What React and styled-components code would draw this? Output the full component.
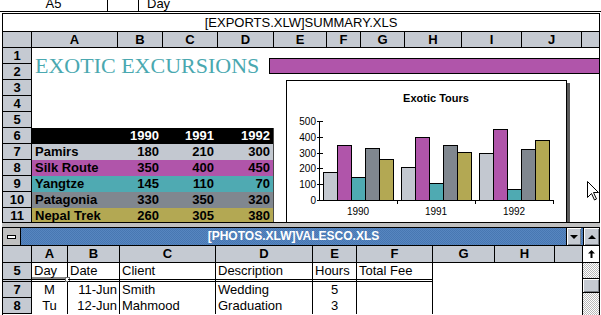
import React from "react";
import styled, { createGlobalStyle } from "styled-components";

const GlobalStyle = createGlobalStyle`
  *, *::before, *::after { box-sizing: border-box; }
  html, body { margin: 0; padding: 0; background: #fff; }
  body {
    font-family: "Liberation Sans", Arial, sans-serif;
    width: 601px;
    height: 315px;
    overflow: hidden;
  }
`;

const TOP_COLS = "29px 86px 45px 55px 56px 53px 34px 44px 57px 60px 60px 1fr";
const BOTTOM_COLS = "29px 36px 52px 96px 97px 44px 76px 62px 60px 1fr";
const TOP_LETTERS = ["A", "B", "C", "D", "E", "F", "G", "H", "I", "J", ""];
const BOTTOM_LETTERS = ["A", "B", "C", "D", "E", "F", "G", "H", ""];

const SERIES = [
  { name: "Pamirs", color: "#c3c8d0", values: [180, 210, 300] },
  { name: "Silk Route", color: "#b055aa", values: [350, 400, 450] },
  { name: "Yangtze", color: "#4faab2", values: [145, 110, 70] },
  { name: "Patagonia", color: "#80878f", values: [330, 350, 320] },
  { name: "Nepal Trek", color: "#b3a853", values: [260, 305, 380] },
];
const YEARS = ["1990", "1991", "1992"];
const HEADER_GRAY = "#c5cad2";

const Screen = styled.div`
  position: relative;
  width: 601px;
  height: 315px;
  overflow: hidden;
  background: #fff;
`;

/* formula bar */
const FormulaBar = styled.div`
  display: flex;
  height: 12px;
  border-bottom: 1px solid #000;
  font-size: 13px;
  line-height: 11px;
  overflow: hidden;
`;

const NameBox = styled.div`
  width: 108px;
  border-right: 1px solid #000;
  text-align: center;
  margin-top: -2px;
`;

const FormulaGap = styled.div`
  width: 31px;
  border-right: 1px solid #000;
`;

const FormulaText = styled.div`
  padding-left: 8px;
  margin-top: -2px;
`;

/* windows */
const TopWindow = styled.div`
  margin: 1px 1px 0 2px;
  height: 210px;
  border: 1px solid #000;
  overflow: hidden;
  background: #fff;
`;

const TitleBar = styled.div`
  height: 18px;
  border-bottom: 1px solid #000;
  font-size: 13px;
  line-height: 17px;
  text-align: center;
  color: #000;
`;

const HeaderRow = styled.div`
  display: grid;
  grid-template-columns: ${(p) => p.$cols};
  height: ${(p) => p.$h || 16}px;
  border-bottom: 1px solid #000;
  background: ${HEADER_GRAY};
`;

const ColHead = styled.div`
  border-right: ${(p) => (p.$last ? "none" : "1px solid #000")};
  font-size: 13px;
  font-weight: bold;
  line-height: 15px;
  text-align: center;
`;

const SheetBody = styled.div`
  display: grid;
  grid-template-columns: ${TOP_COLS};
  grid-template-rows: repeat(11, 16px);
`;

const RowHead = styled.div`
  grid-column: 1;
  grid-row: ${(p) => p.$row || "auto"};
  background: ${HEADER_GRAY};
  border-right: 1px solid #000;
  border-bottom: ${(p) => (p.$double ? "3px double #000" : "1px solid #000")};
  font-size: 13px;
  font-weight: bold;
  line-height: 15px;
  text-align: center;
`;

const Banner = styled.div`
  grid-column: 2 / 6;
  grid-row: 1 / 3;
  margin-top: 7px;
  padding-left: 3px;
  font-family: "Liberation Serif", "Times New Roman", serif;
  font-size: 22px;
  line-height: 22px;
  color: #4aa8b0;
  white-space: nowrap;
`;

const PurpleBar = styled.div`
  grid-column: 6 / 13;
  grid-row: 1 / 3;
  margin: 10px 0 0 -5px;
  height: 16px;
  background: #b055aa;
  border: 1px solid #000;
  border-right: none;
`;

const ChartFrame = styled.div`
  grid-column: 6 / 12;
  grid-row: 3 / 12;
  justify-self: start;
  margin-left: 12px;
  width: 281px;
  height: 150px;
  border: 1px solid #000;
  background: #fff;
  box-shadow: 3px 3px 0 #5a5a5a;
`;

const DataRow = styled.div`
  grid-column: 2 / 6;
  grid-row: ${(p) => p.$row};
  display: grid;
  grid-template-columns: 86px 45px 55px 56px;
  background: ${(p) => p.$bg};
  color: ${(p) => (p.$dark ? "#fff" : "#000")};
  border-right: 1px solid #4a4a4a;
  font-size: 13px;
  font-weight: bold;
  line-height: 16px;
`;

const LabelCell = styled.div`
  padding-left: 3px;
  white-space: nowrap;
`;

const NumCell = styled.div`
  text-align: right;
  padding-right: 4px;
`;

/* bottom window */
const BottomWindow = styled.div`
  margin: 0 1px 0 2px;
  border-left: 1px solid #000;
  border-right: 1px solid #000;
  background: #fff;
`;

const FrameStrip = styled.div`
  height: 5px;
  margin: 0 -1px;
  background: #c0c0c0;
  border-bottom: 1px solid #000;
`;

const ActiveTitle = styled.div`
  display: flex;
  height: 18px;
  border-bottom: 1px solid #000;
  background: repeating-conic-gradient(#4877b2 0 25%, #5786c0 0 50%) 0 0 / 2px 2px;
`;

const ControlBox = styled.div`
  width: 18px;
  border-right: 1px solid #000;
  background: #c0c0c0;
  display: flex;
  align-items: center;
  justify-content: center;
`;

const Dash = styled.div`
  width: 9px;
  height: 4px;
  background: #fff;
  border: 1px solid #000;
`;

const ActiveCaption = styled.div`
  flex: 1;
  color: #fff;
  font-size: 12px;
  font-weight: bold;
  line-height: 17px;
  text-align: center;
  white-space: nowrap;
`;

const SizeButton = styled.div`
  width: ${(p) => p.$w}px;
  margin-left: ${(p) => p.$gap || 0}px;
  background: ${HEADER_GRAY};
  border-left: 1px solid #000;
  border-right: ${(p) => (p.$edge ? "1px solid #000" : "none")};
  box-shadow: inset 1px 1px 0 #fff, inset -1px -1px 0 #7a7f86;
  display: flex;
  align-items: center;
  justify-content: center;
`;

const Triangle = styled.div`
  width: 0;
  height: 0;
  border-left: 4px solid transparent;
  border-right: 4px solid transparent;
  ${(p) => (p.$up ? "border-bottom: 4px solid #000;" : "border-top: 4px solid #000;")}
`;

const BottomBody = styled.div`
  display: flex;
`;

const Sheet = styled.div`
  flex: 1;
  min-width: 0;
`;

const GridRow = styled.div`
  display: grid;
  grid-template-columns: ${BOTTOM_COLS};
  height: ${(p) => p.$h}px;
`;

const Cell = styled.div`
  position: relative;
  border-right: ${(p) => (p.$b ? "1px solid #000" : "none")};
  border-bottom: ${(p) => (p.$double ? "3px double #000" : "none")};
  box-shadow: ${(p) => (p.$active ? "inset 0 -2px 0 #8c8c8c" : "none")};
  padding: 0 2px;
  font-size: 13px;
  line-height: 16px;
  text-align: ${(p) => p.$align || "left"};
  white-space: nowrap;
  color: #000;
`;

const FillHandle = styled.span`
  position: absolute;
  right: -3px;
  bottom: -3px;
  width: 5px;
  height: 5px;
  background: #fff;
  border: 1px solid #6a6a6a;
`;

const ScrollBar = styled.div`
  width: 17px;
  border-left: 1px solid #000;
  display: flex;
  flex-direction: column;
  height: 70px;
`;

const ScrollArrow = styled.div`
  height: 17px;
  background: #fff;
  border-bottom: 1px solid #000;
  display: flex;
  align-items: center;
  justify-content: center;
`;

const Track = styled.div`
  height: ${(p) => (p.$h ? `${p.$h}px` : "auto")};
  flex: ${(p) => (p.$h ? "none" : 1)};
  background: repeating-conic-gradient(#fff 0 25%, #b8b8b8 0 50%) 0 0 / 2px 2px;
`;

const Thumb = styled.div`
  height: 15px;
  background: ${HEADER_GRAY};
  border-top: 1px solid #000;
  border-bottom: 1px solid #000;
  box-shadow: inset 1px 1px 0 #fff, inset -1px -1px 0 #7a7f86;
`;

const Cursor = styled.svg`
  position: absolute;
  left: 587px;
  top: 181px;
`;

function TourChart() {
  const k = 0.158;
  return (
    <svg width="279" height="148" viewBox="1 1 279 148" fontFamily="Liberation Sans, Arial, sans-serif">
      <text x="150" y="22" textAnchor="middle" fontSize="11" fontWeight="bold">
        Exotic Tours
      </text>
      {[0, 100, 200, 300, 400, 500].map((v) => {
        const y = Math.round(120 - v * k) + 0.5;
        return (
          <g key={v}>
            <line x1="31" y1={y} x2="37" y2={y} stroke="#000" />
            <text x="30" y={y + 3.5} textAnchor="end" fontSize="10">
              {v}
            </text>
          </g>
        );
      })}
      <line x1="33.5" y1="41" x2="33.5" y2="121" stroke="#000" />
      {SERIES.map((s, i) =>
        s.values.map((v, g) => {
          const h = Math.round(v * k);
          return (
            <rect
              key={s.name + g}
              x={37.5 + 78 * g + 14 * i}
              y={120.5 - h}
              width="14"
              height={h}
              fill={s.color}
              stroke="#000"
            />
          );
        })
      )}
      <line x1="33" y1="120.5" x2="268" y2="120.5" stroke="#000" />
      {[111.5, 189.5, 267.5].map((x) => (
        <line key={x} x1={x} y1="120" x2={x} y2="124" stroke="#000" />
      ))}
      {YEARS.map((yr, g) => (
        <text key={yr} x={72 + 78 * g} y="135" textAnchor="middle" fontSize="10">
          {yr}
        </text>
      ))}
    </svg>
  );
}

export default function App() {
  return (
    <>
      <GlobalStyle />
      <Screen>
        <FormulaBar>
          <NameBox>A5</NameBox>
          <FormulaGap />
          <FormulaText>Day</FormulaText>
        </FormulaBar>

        <TopWindow>
          <TitleBar>[EXPORTS.XLW]SUMMARY.XLS</TitleBar>
          <HeaderRow $cols={TOP_COLS}>
            <ColHead />
            {TOP_LETTERS.map((l, i) => (
              <ColHead key={i} $last={l === ""}>
                {l}
              </ColHead>
            ))}
          </HeaderRow>
          <SheetBody>
            {Array.from({ length: 11 }, (_, i) => (
              <RowHead key={i} $row={i + 1}>
                {i + 1}
              </RowHead>
            ))}
            <Banner>EXOTIC EXCURSIONS</Banner>
            <PurpleBar />
            <ChartFrame>
              <TourChart />
            </ChartFrame>
            <DataRow $row={6} $bg="#000" $dark>
              <LabelCell />
              {YEARS.map((y) => (
                <NumCell key={y}>{y}</NumCell>
              ))}
            </DataRow>
            {SERIES.map((s, i) => (
              <DataRow key={s.name} $row={7 + i} $bg={s.color}>
                <LabelCell>{s.name}</LabelCell>
                {s.values.map((v, j) => (
                  <NumCell key={j}>{v}</NumCell>
                ))}
              </DataRow>
            ))}
          </SheetBody>
        </TopWindow>

        <BottomWindow>
          <FrameStrip />
          <ActiveTitle>
            <ControlBox>
              <Dash />
            </ControlBox>
            <ActiveCaption>[PHOTOS.XLW]VALESCO.XLS</ActiveCaption>
            <SizeButton $w={15}>
              <Triangle />
            </SizeButton>
            <SizeButton $w={16} $gap={2}>
              <Triangle $up />
            </SizeButton>
          </ActiveTitle>
          <BottomBody>
            <Sheet>
              <HeaderRow $cols={BOTTOM_COLS} $h={17}>
                <ColHead />
                {BOTTOM_LETTERS.map((l, i) => (
                  <ColHead key={i} $last={l === ""}>
                    {l}
                  </ColHead>
                ))}
              </HeaderRow>
              <GridRow $h={19}>
                <RowHead $double>5</RowHead>
                <Cell $b $double $active>
                  Day
                  <FillHandle />
                </Cell>
                <Cell $b $double>Date</Cell>
                <Cell $b $double>Client</Cell>
                <Cell $b $double>Description</Cell>
                <Cell $b $double>Hours</Cell>
                <Cell $b $double>Total Fee</Cell>
                <Cell />
                <Cell />
                <Cell />
              </GridRow>
              <GridRow $h={16}>
                <RowHead>7</RowHead>
                <Cell $b $align="center">M</Cell>
                <Cell $b $align="right">11-Jun</Cell>
                <Cell $b>Smith</Cell>
                <Cell $b>Wedding</Cell>
                <Cell $b $align="center">5</Cell>
                <Cell $b />
                <Cell />
                <Cell />
                <Cell />
              </GridRow>
              <GridRow $h={16}>
                <RowHead>8</RowHead>
                <Cell $b $align="center">Tu</Cell>
                <Cell $b $align="right">12-Jun</Cell>
                <Cell $b>Mahmood</Cell>
                <Cell $b>Graduation</Cell>
                <Cell $b $align="center">3</Cell>
                <Cell $b />
                <Cell />
                <Cell />
                <Cell />
              </GridRow>
            </Sheet>
            <ScrollBar>
              <ScrollArrow>
                <svg width="7" height="8" viewBox="0 0 7 8">
                  <path d="M3.5 0 L7 3.5 L4.5 3.5 L4.5 8 L2.5 8 L2.5 3.5 L0 3.5 Z" fill="#000" />
                </svg>
              </ScrollArrow>
              <Track $h={15} />
              <Thumb />
              <Track />
            </ScrollBar>
          </BottomBody>
        </BottomWindow>

        <Cursor width="13" height="20" viewBox="0 0 13 20">
          <path
            d="M0.5 0.5 L0.5 16.5 L4.5 12.5 L7.5 19 L9.5 18 L6.5 11.5 L11.5 11.5 Z"
            fill="#fff"
            stroke="#000"
          />
        </Cursor>
      </Screen>
    </>
  );
}
